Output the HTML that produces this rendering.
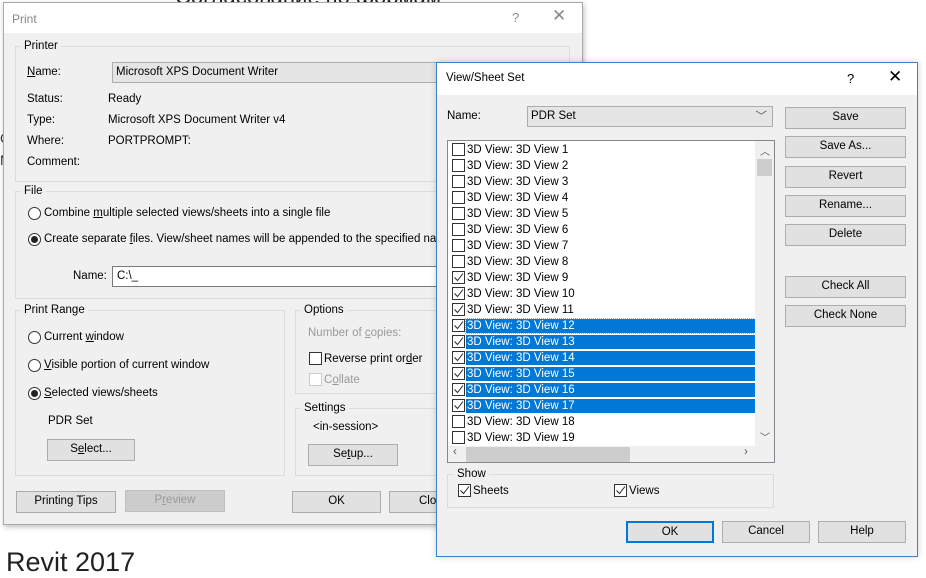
<!DOCTYPE html>
<html><head><meta charset="utf-8"><style>
*{box-sizing:border-box}
body{margin:0;width:926px;height:563px;overflow:hidden;background:#fff;font-family:"Liberation Sans",sans-serif;font-size:11.5px;color:#000;position:relative}
.a{position:absolute;white-space:nowrap}
.btn{position:absolute;background:#e1e1e1;border:1px solid #adadad;text-align:center;line-height:19px;font-size:11.5px}
.grp{position:absolute;border:1px solid #dcdcdc}
.gl{position:absolute;background:#f0f0f0;padding:0 3px;top:-8px;left:5px;line-height:14px}
.rad{position:absolute;width:13px;height:13px;border:1px solid #333;border-radius:50%;background:#fff}
.rad.on::after{content:"";position:absolute;left:2px;top:2px;width:7px;height:7px;border-radius:50%;background:#222}
.cb{position:absolute;width:13px;height:13px;border:1px solid #333;background:#fff}
.row{position:absolute;left:0;height:16px;width:308px}
.row .cb{left:4px;top:1px}
.row span{position:absolute;left:18px;top:1px;line-height:14px;padding:0 1px}
.sel span{background:#0078d7;color:#fff;width:289px}
u{text-decoration:underline}
</style></head><body>
<div class="a" style="left:175px;top:-16px;font-size:22px;color:#222">Согласование по формам</div>
<div class="a" style="left:0;top:130px;font-size:14px;color:#333">O</div>
<div class="a" style="left:0;top:152px;font-size:14px;color:#333">M</div>
<div class="a" style="left:6px;top:547px;font-size:27px;color:#222">Revit 2017</div>

<!-- Print dialog -->
<div class="a" style="left:3px;top:2px;width:580px;height:523px;background:#f0f0f0;border:1px solid #aaa;box-shadow:1px 2px 5px rgba(0,0,0,.25)">
 <div class="a" style="left:0;top:0;width:578px;height:30px;background:#fff"></div>
 <div class="a" style="left:8px;top:9px;color:#888;font-size:12px">Print</div>
 <div class="a" style="left:508px;top:7px;color:#888;font-size:13px">?</div>
 <div class="a" style="left:548px;top:3px;color:#888;font-size:17px">✕</div>
</div>
<div class="grp" style="left:15px;top:46px;width:555px;height:136px"><div class="gl">Printer</div></div>
<div class="a" style="left:27px;top:66px"><u>N</u>ame:</div>
<div class="a" style="left:112px;top:62px;width:340px;height:21px;background:#e5e5e5;border:1px solid #adadad;padding:3px 3px">Microsoft XPS Document Writer</div>
<div class="a" style="left:27px;top:93px">Status:</div><div class="a" style="left:108px;top:93px">Ready</div>
<div class="a" style="left:27px;top:114px">Type:</div><div class="a" style="left:108px;top:114px">Microsoft XPS Document Writer v4</div>
<div class="a" style="left:27px;top:135px">Where:</div><div class="a" style="left:108px;top:135px">PORTPROMPT:</div>
<div class="a" style="left:27px;top:156px">Comment:</div>
<div class="grp" style="left:15px;top:191px;width:555px;height:108px"><div class="gl">File</div></div>
<div class="rad" style="left:28px;top:207px"></div><div class="a" style="left:44px;top:207px">Combine <u>m</u>ultiple selected views/sheets into a single file</div>
<div class="rad on" style="left:28px;top:233px"></div><div class="a" style="left:44px;top:233px">Create separate <u>f</u>iles. View/sheet names will be appended to the specified name</div>
<div class="a" style="left:73px;top:270px">Name:</div>
<div class="a" style="left:112px;top:266px;width:330px;height:21px;background:#fff;border:1px solid #7a7a7a;padding:3px 4px">C:\_</div>
<div class="grp" style="left:15px;top:310px;width:270px;height:166px"><div class="gl">Print Range</div></div>
<div class="rad" style="left:28px;top:331px"></div><div class="a" style="left:44px;top:331px">Current <u>w</u>indow</div>
<div class="rad" style="left:28px;top:359px"></div><div class="a" style="left:44px;top:359px"><u>V</u>isible portion of current window</div>
<div class="rad on" style="left:28px;top:387px"></div><div class="a" style="left:44px;top:387px"><u>S</u>elected views/sheets</div>
<div class="a" style="left:48px;top:415px">PDR Set</div>
<div class="btn" style="left:47px;top:439px;width:88px;height:22px">S<u>e</u>lect...</div>
<div class="grp" style="left:295px;top:310px;width:160px;height:84px"><div class="gl">Options</div></div>
<div class="a" style="left:308px;top:327px;color:#999">Number of <u>c</u>opies:</div>
<div class="cb" style="left:309px;top:352px"></div><div class="a" style="left:324px;top:353px">Reverse print or<u>d</u>er</div>
<div class="cb" style="left:309px;top:373px;border-color:#ccc"></div><div class="a" style="left:324px;top:374px;color:#999">C<u>o</u>llate</div>
<div class="grp" style="left:295px;top:408px;width:160px;height:68px"><div class="gl">Settings</div></div>
<div class="a" style="left:313px;top:421px">&lt;in-session&gt;</div>
<div class="btn" style="left:308px;top:444px;width:90px;height:22px">Se<u>t</u>up...</div>
<div class="btn" style="left:16px;top:491px;width:100px;height:22px">Printing Tips</div>
<div class="btn" style="left:125px;top:490px;width:100px;height:22px;background:#ccc;border-color:#bfbfbf;color:#999">P<u>r</u>eview</div>
<div class="btn" style="left:292px;top:491px;width:89px;height:22px">OK</div>
<div class="btn" style="left:389px;top:491px;width:89px;height:22px;text-align:left;padding-left:29px">Close</div>

<!-- View/Sheet dialog -->
<div class="a" style="left:436px;top:62px;width:482px;height:495px;background:#f0f0f0;border:1px solid #3d84c6;box-shadow:0 0 6px rgba(0,0,0,.2)">
 <div class="a" style="left:0;top:0;width:480px;height:32px;background:#fff"></div>
 <div class="a" style="left:9px;top:9px">View/Sheet Set</div>
 <div class="a" style="left:410px;top:8px;font-size:13px">?</div>
 <div class="a" style="left:451px;top:4px;font-size:17px">✕</div>
</div>
<div class="a" style="left:447px;top:110px">Name:</div>
<div class="a" style="left:527px;top:106px;width:246px;height:21px;background:#e5e5e5;border:1px solid #adadad;padding:3px 3px">PDR Set<span style="position:absolute;right:5px;top:1px;color:#555">﹀</span></div>
<div class="a" style="left:447px;top:140px;width:328px;height:323px;background:#fff;border:1px solid #828790;overflow:hidden">
 <div class="a" style="left:0;top:1px;width:330px">
  <div class="row" style="top:0"><div class="cb"></div><span>3D View: 3D View 1</span></div>
  <div class="row" style="top:16px"><div class="cb"></div><span>3D View: 3D View 2</span></div>
  <div class="row" style="top:32px"><div class="cb"></div><span>3D View: 3D View 3</span></div>
  <div class="row" style="top:48px"><div class="cb"></div><span>3D View: 3D View 4</span></div>
  <div class="row" style="top:64px"><div class="cb"></div><span>3D View: 3D View 5</span></div>
  <div class="row" style="top:80px"><div class="cb"></div><span>3D View: 3D View 6</span></div>
  <div class="row" style="top:96px"><div class="cb"></div><span>3D View: 3D View 7</span></div>
  <div class="row" style="top:112px"><div class="cb"></div><span>3D View: 3D View 8</span></div>
  <div class="row" style="top:128px"><div class="cb"><svg width="11" height="11" style="position:absolute;left:0;top:0"><path d="M1.5 5.5L4.5 8.5L10 1.5" stroke="#222" fill="none"/></svg></div><span>3D View: 3D View 9</span></div>
  <div class="row" style="top:144px"><div class="cb"><svg width="11" height="11" style="position:absolute;left:0;top:0"><path d="M1.5 5.5L4.5 8.5L10 1.5" stroke="#222" fill="none"/></svg></div><span>3D View: 3D View 10</span></div>
  <div class="row" style="top:160px"><div class="cb"><svg width="11" height="11" style="position:absolute;left:0;top:0"><path d="M1.5 5.5L4.5 8.5L10 1.5" stroke="#222" fill="none"/></svg></div><span>3D View: 3D View 11</span></div>
  <div class="row sel" style="top:176px"><div class="cb"><svg width="11" height="11" style="position:absolute;left:0;top:0"><path d="M1.5 5.5L4.5 8.5L10 1.5" stroke="#222" fill="none"/></svg></div><span style="outline:1px dotted #9ac">3D View: 3D View 12</span></div>
  <div class="row sel" style="top:192px"><div class="cb"><svg width="11" height="11" style="position:absolute;left:0;top:0"><path d="M1.5 5.5L4.5 8.5L10 1.5" stroke="#222" fill="none"/></svg></div><span>3D View: 3D View 13</span></div>
  <div class="row sel" style="top:208px"><div class="cb"><svg width="11" height="11" style="position:absolute;left:0;top:0"><path d="M1.5 5.5L4.5 8.5L10 1.5" stroke="#222" fill="none"/></svg></div><span>3D View: 3D View 14</span></div>
  <div class="row sel" style="top:224px"><div class="cb"><svg width="11" height="11" style="position:absolute;left:0;top:0"><path d="M1.5 5.5L4.5 8.5L10 1.5" stroke="#222" fill="none"/></svg></div><span>3D View: 3D View 15</span></div>
  <div class="row sel" style="top:240px"><div class="cb"><svg width="11" height="11" style="position:absolute;left:0;top:0"><path d="M1.5 5.5L4.5 8.5L10 1.5" stroke="#222" fill="none"/></svg></div><span>3D View: 3D View 16</span></div>
  <div class="row sel" style="top:256px"><div class="cb"><svg width="11" height="11" style="position:absolute;left:0;top:0"><path d="M1.5 5.5L4.5 8.5L10 1.5" stroke="#222" fill="none"/></svg></div><span>3D View: 3D View 17</span></div>
  <div class="row" style="top:272px"><div class="cb"></div><span>3D View: 3D View 18</span></div>
  <div class="row" style="top:288px"><div class="cb"></div><span>3D View: 3D View 19</span></div>
 </div>
 <div class="a" style="left:307px;top:0;width:19px;height:305px;background:#f0f0f0"></div>
 <div class="a" style="left:309px;top:18px;width:15px;height:17px;background:#cdcdcd"></div>
 <div class="a" style="left:312px;top:2px;font-size:10px;color:#555">︿</div>
 <div class="a" style="left:312px;top:288px;font-size:10px;color:#555">﹀</div>
 <div class="a" style="left:0;top:305px;width:326px;height:16px;background:#f0f0f0"></div>
 <div class="a" style="left:18px;top:306px;width:164px;height:15px;background:#cdcdcd"></div>
 <div class="a" style="left:5px;top:305px;color:#555">‹</div>
 <div class="a" style="left:296px;top:305px;color:#555">›</div>
</div>
<div class="grp" style="left:447px;top:474px;width:327px;height:34px"><div class="gl" style="left:6px">Show</div></div>
<div class="cb" style="left:458px;top:484px"><svg width="11" height="11" style="position:absolute;left:0;top:0"><path d="M1.5 5.5L4.5 8.5L10 1.5" stroke="#222" fill="none"/></svg></div><div class="a" style="left:473px;top:485px">Sheets</div>
<div class="cb" style="left:614px;top:484px"><svg width="11" height="11" style="position:absolute;left:0;top:0"><path d="M1.5 5.5L4.5 8.5L10 1.5" stroke="#222" fill="none"/></svg></div><div class="a" style="left:629px;top:485px">Views</div>
<div class="btn" style="left:785px;top:107px;width:121px;height:22px">Save</div>
<div class="btn" style="left:785px;top:136px;width:121px;height:22px">Save As...</div>
<div class="btn" style="left:785px;top:166px;width:121px;height:22px">Revert</div>
<div class="btn" style="left:785px;top:195px;width:121px;height:22px">Rename...</div>
<div class="btn" style="left:785px;top:224px;width:121px;height:22px">Delete</div>
<div class="btn" style="left:785px;top:276px;width:121px;height:22px">Check All</div>
<div class="btn" style="left:785px;top:305px;width:121px;height:22px">Check None</div>
<div class="btn" style="left:626px;top:521px;width:88px;height:22px;border:2px solid #0078d7;line-height:18px">OK</div>
<div class="btn" style="left:722px;top:521px;width:88px;height:22px">Cancel</div>
<div class="btn" style="left:818px;top:521px;width:88px;height:22px">Help</div>
</body></html>
